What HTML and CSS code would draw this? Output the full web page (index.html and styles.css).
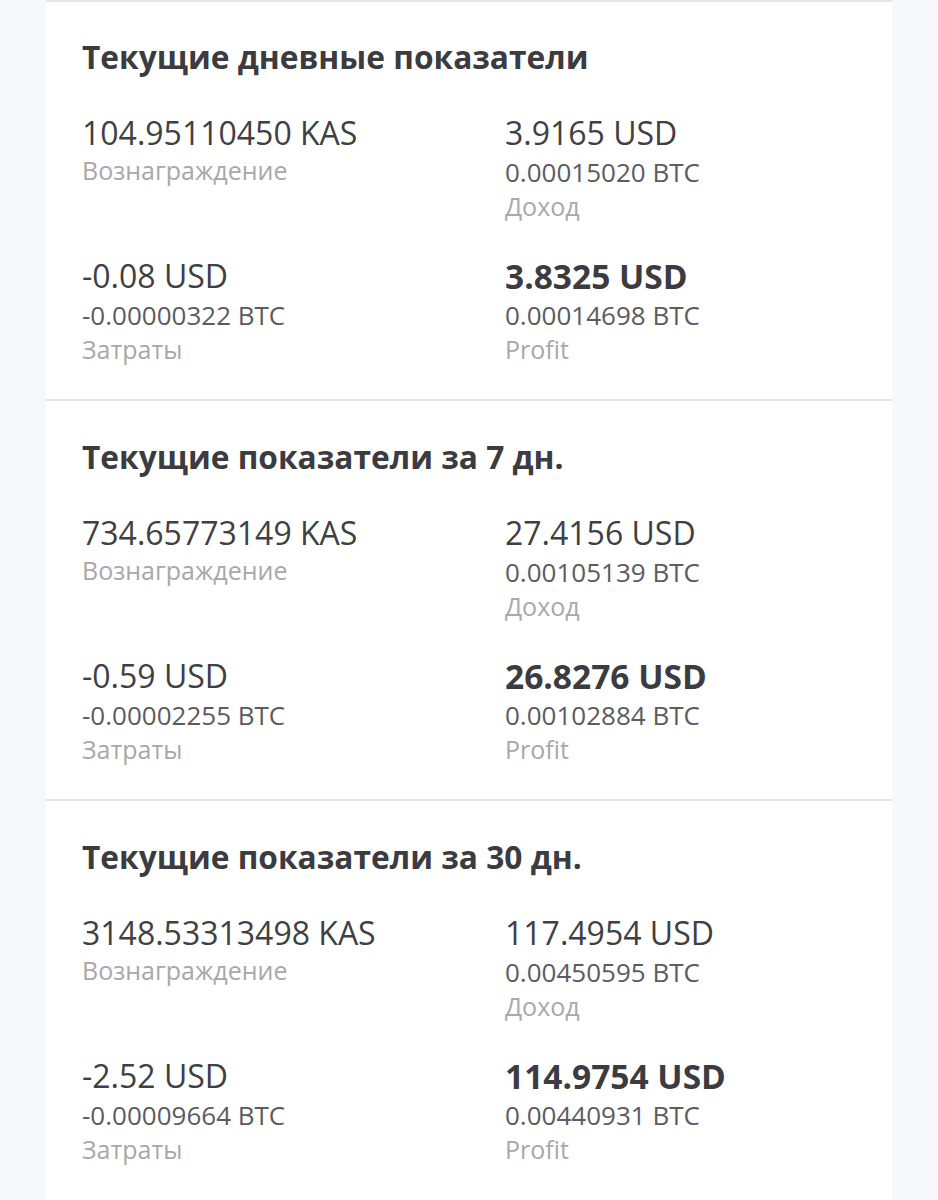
FILE: index.html
```html
<!DOCTYPE html>
<html lang="ru">
<head>
<meta charset="utf-8">
<title>Показатели</title>
<link rel="stylesheet" href="styles.css">
</head>
<body>
<div class="card">
  <section class="block">
    <h2 class="title">Текущие дневные показатели</h2>
    <div class="grid">
      <div class="cell">
        <div class="value">104.95110450 KAS</div>
        <div class="label">Вознаграждение</div>
      </div>
      <div class="cell">
        <div class="value">3.9165 USD</div>
        <div class="sub">0.00015020 BTC</div>
        <div class="label">Доход</div>
      </div>
      <div class="cell">
        <div class="value">-0.08 USD</div>
        <div class="sub">-0.00000322 BTC</div>
        <div class="label">Затраты</div>
      </div>
      <div class="cell">
        <div class="value bold">3.8325 USD</div>
        <div class="sub">0.00014698 BTC</div>
        <div class="label">Profit</div>
      </div>
    </div>
  </section>
  <section class="block">
    <h2 class="title">Текущие показатели за 7 дн.</h2>
    <div class="grid">
      <div class="cell">
        <div class="value">734.65773149 KAS</div>
        <div class="label">Вознаграждение</div>
      </div>
      <div class="cell">
        <div class="value">27.4156 USD</div>
        <div class="sub">0.00105139 BTC</div>
        <div class="label">Доход</div>
      </div>
      <div class="cell">
        <div class="value">-0.59 USD</div>
        <div class="sub">-0.00002255 BTC</div>
        <div class="label">Затраты</div>
      </div>
      <div class="cell">
        <div class="value bold">26.8276 USD</div>
        <div class="sub">0.00102884 BTC</div>
        <div class="label">Profit</div>
      </div>
    </div>
  </section>
  <section class="block">
    <h2 class="title">Текущие показатели за 30 дн.</h2>
    <div class="grid">
      <div class="cell">
        <div class="value">3148.53313498 KAS</div>
        <div class="label">Вознаграждение</div>
      </div>
      <div class="cell">
        <div class="value">117.4954 USD</div>
        <div class="sub">0.00450595 BTC</div>
        <div class="label">Доход</div>
      </div>
      <div class="cell">
        <div class="value">-2.52 USD</div>
        <div class="sub">-0.00009664 BTC</div>
        <div class="label">Затраты</div>
      </div>
      <div class="cell">
        <div class="value bold">114.9754 USD</div>
        <div class="sub">0.00440931 BTC</div>
        <div class="label">Profit</div>
      </div>
    </div>
  </section>
</div>
</body>
</html>
```
FILE: styles.css
```css
html, body {
  margin: 0;
  padding: 0;
  background: #f7f8fc;
}
body {
  font-family: "Open Sans", "Noto Sans", sans-serif;
  color: #3f3f44;
  height: 1200px;
  overflow: hidden;
}
.card {
  margin-left: 46px;
  width: 846px;
  background: #ffffff;
  border-top: 2px solid #e6e6e8;
  min-height: 1200px;
}
.block {
  padding: 35px 0 34px;
  border-bottom: 2px solid #e4e4e6;
}
.block + .block {
  padding-top: 36px;
}
.block:last-child {
  border-bottom: none;
}
.title {
  margin: 0 0 35px 36px;
  font-size: 31.7px;
  line-height: 40px;
  font-weight: 700;
  color: #3b3b40;
}
.grid {
  display: grid;
  grid-template-columns: 1fr 1fr;
  row-gap: 33px;
}
.cell {
  padding-left: 36px;
  display: flex;
  flex-direction: column;
}
.value {
  font-size: 32px;
  line-height: 42px;
  color: #3f3f44;
}
.value.bold {
  font-size: 33.5px;
  font-weight: 700;
  color: #3b3b40;
}
.sub {
  font-size: 26px;
  line-height: 36px;
  color: #5b5b60;
}
.label {
  font-size: 25px;
  line-height: 32px;
  color: #a8a8ab;
}
```
